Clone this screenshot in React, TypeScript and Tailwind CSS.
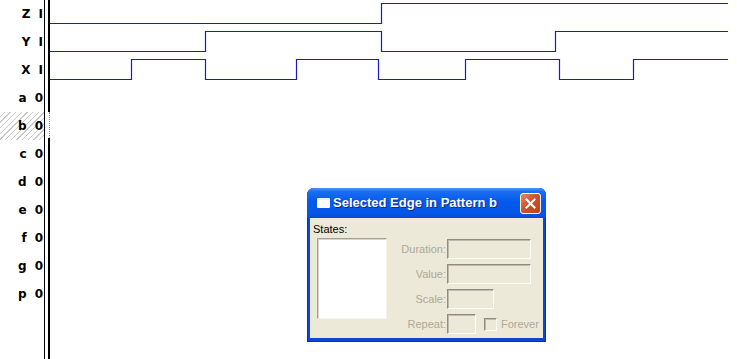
import React from "react";

const rows: { l: string; v: string }[] = [
  { l: "Z", v: "I" },
  { l: "Y", v: "I" },
  { l: "X", v: "I" },
  { l: "a", v: "0" },
  { l: "b", v: "0" },
  { l: "c", v: "0" },
  { l: "d", v: "0" },
  { l: "e", v: "0" },
  { l: "f", v: "0" },
  { l: "g", v: "0" },
  { l: "p", v: "0" },
];

function Waves() {
  const c = "#1a1acc";
  return (
    <svg width="687" height="359" viewBox="0 0 687 359">
      <path d="M0 23.5 H331.5 V3.5 H678" fill="none" stroke={c} strokeWidth="1.2" />
      <path d="M0 51.5 H155.5 V31.5 H331.5 V51.5 H505.5 V31.5 H678" fill="none" stroke={c} strokeWidth="1.2" />
      <path
        d="M0 79.5 H81.5 V59.5 H155.5 V79.5 H246.5 V59.5 H328.5 V79.5 H415.5 V59.5 H509.5 V79.5 H583.5 V59.5 H678"
        fill="none"
        stroke={c}
        strokeWidth="1.2"
      />
    </svg>
  );
}

function Field({ label, w }: { label: string; w: string }) {
  return (
    <div className="flex items-center h-[20px] mb-[5px]">
      <div className="w-[57px] text-right pr-[1px] text-[#aca899]">{label}</div>
      <div
        className={`${w} h-[20px] bg-[#ece9d8] border border-t-[#8e8c80] border-l-[#8e8c80] border-b-[#fdfdfb] border-r-[#fdfdfb] shadow-[inset_1px_1px_0_#bdbbad]`}
      />
    </div>
  );
}

export default function App() {
  return (
    <div className="relative w-[737px] h-[359px] bg-white overflow-hidden flex" style={{ fontFamily: '"Liberation Sans", Arial, sans-serif' }}>
      <div className="w-[44px] flex flex-col">
        {rows.map((r) => (
          <div
            key={r.l}
            className={`h-[28px] flex items-center justify-end gap-[8px] pr-[1px] text-[12px] font-bold text-black font-['DejaVu_Sans',sans-serif] ${
              r.l === "b" ? "bg-[repeating-linear-gradient(135deg,transparent_0_3px,#c9c9c9_3px_4px)]" : ""
            }`}
          >
            <span>{r.l}</span>
            <span>{r.v}</span>
          </div>
        ))}
      </div>
      <div className="w-[1px] h-full bg-black" />
      <div className="w-[3px]" />
      <div className="w-[2px] h-full flex flex-col">
        <div className="h-[112px] bg-black" />
        <div className="h-[26px] flex justify-end">
          <div className="w-[1px] h-full border-r border-dotted border-[#8a8a8a]" />
        </div>
        <div className="flex-1 bg-black" />
      </div>
      <div className="flex-1">
        <Waves />
      </div>

      <div className="absolute left-[307px] top-[188px] w-[239px] h-[154px] rounded-t-[7px] bg-[#0a48d8] flex flex-col overflow-hidden shadow-[inset_0_0_0_1px_#0a2fb0]">
        <div className="h-[30px] flex items-center relative bg-[linear-gradient(to_bottom,#4a97fa_0%,#1a6ef0_12%,#0559ea_45%,#0556e6_85%,#0a4ad6_100%)]">
          <div className="ml-[10px] w-[13px] h-[10px] bg-white border-t-[2px] border-[#e8f0ff] rounded-[1px]" />
          <div className="ml-[3px] text-[13px] font-bold text-white [text-shadow:1px_1px_0_#0a2a9a] whitespace-nowrap">
            Selected Edge in Pattern b
          </div>
          <div className="absolute left-[213px] top-[5px] w-[21px] h-[21px] rounded-[3px] border border-white bg-[linear-gradient(to_bottom_right,#e8876a,#d4512c_45%,#c23f1c)] flex items-center justify-center">
            <svg width="11" height="11" viewBox="0 0 11 11">
              <path d="M1.5 1.5 L9.5 9.5 M9.5 1.5 L1.5 9.5" stroke="white" strokeWidth="2" strokeLinecap="square" />
            </svg>
          </div>
        </div>
        <div className="flex-1 mx-[3px] mb-[4px] bg-[#ece9d8] flex text-[11px]">
          <div className="w-[80px] flex flex-col">
            <div className="ml-[3px] mt-[4px] h-[14px] leading-[14px] text-black">States:</div>
            <div className="ml-[7px] mt-[2px] w-[70px] h-[81px] bg-white border border-t-[#a3a194] border-l-[#a3a194] border-b-[#f4f3ee] border-r-[#f4f3ee] shadow-[inset_1px_1px_0_#d8d6c9]" />
          </div>
          <div className="flex flex-col pt-[21px]">
            <Field label="Duration:" w="w-[84px]" />
            <Field label="Value:" w="w-[84px]" />
            <Field label="Scale:" w="w-[47px]" />
            <div className="flex items-center h-[20px]">
              <div className="w-[57px] text-right pr-[1px] text-[#aca899]">Repeat:</div>
              <div className="w-[29px] h-[20px] bg-[#ece9d8] border border-t-[#8e8c80] border-l-[#8e8c80] border-b-[#fdfdfb] border-r-[#fdfdfb] shadow-[inset_1px_1px_0_#bdbbad]" />
              <div className="ml-[8px] w-[13px] h-[13px] bg-[#ece9d8] border border-t-[#8e8c80] border-l-[#8e8c80] border-b-[#fdfdfb] border-r-[#fdfdfb] shadow-[inset_1px_1px_0_#bdbbad]" />
              <div className="ml-[4px] text-[#aca899]">Forever</div>
            </div>
          </div>
        </div>
      </div>
    </div>
  );
}
